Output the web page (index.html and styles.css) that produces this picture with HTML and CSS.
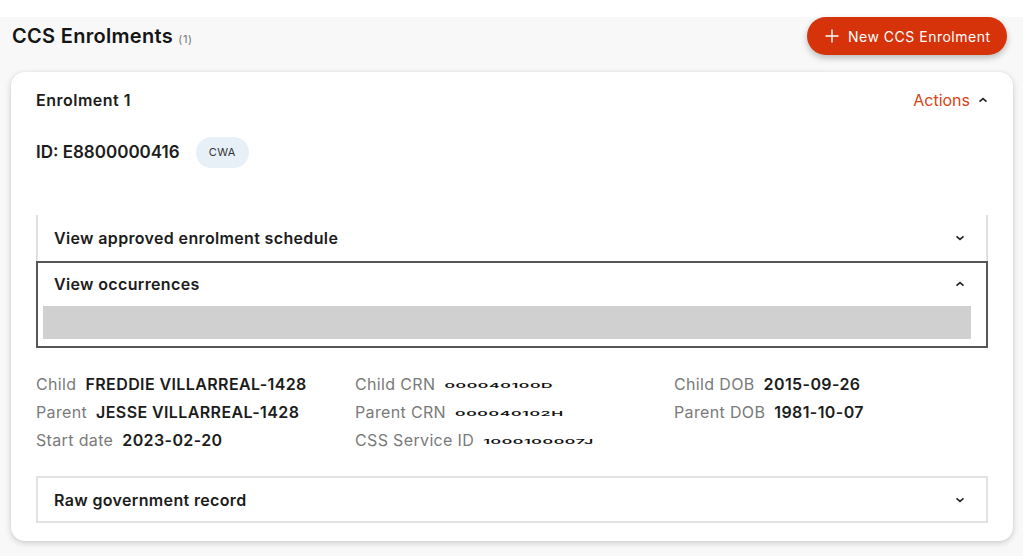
FILE: index.html
```html
<!DOCTYPE html>
<html>
<head>
<meta charset="utf-8">
<link rel="stylesheet" href="styles.css">
</head>
<body>
<div class="topstrip"></div>
<main class="page">
  <header class="page-head">
    <h1 class="title">CCS Enrolments <span class="count">(1)</span></h1>
    <button class="new-btn">
      <svg width="16" height="16" viewBox="0 0 16 16"><path d="M8 1.5v13M1.5 8h13" stroke="#fff" stroke-width="1.4" fill="none"/></svg>
      New CCS Enrolment
    </button>
  </header>
  <section class="card">
    <div class="card-head">
      <span class="card-title">Enrolment 1</span>
      <span class="actions">Actions
        <svg class="chev" width="10" height="8" viewBox="0 0 10 8"><path d="M1.5 5.6L5 2.6L8.5 5.6" stroke="#222" stroke-width="1.6" fill="none"/></svg>
      </span>
    </div>
    <div class="id-row">
      <span class="id">ID: E8800000416</span>
      <span class="chip">CWA</span>
    </div>
    <div class="accordion">
      <div class="acc-item acc-first">
        <span class="acc-title">View approved enrolment schedule</span>
        <svg class="chev" width="10" height="8" viewBox="0 0 10 8"><path d="M1.5 2.4L5 5.4L8.5 2.4" stroke="#222" stroke-width="1.6" fill="none"/></svg>
      </div>
      <div class="acc-item acc-open">
        <div class="acc-row">
          <span class="acc-title">View occurrences</span>
          <svg class="chev" width="10" height="8" viewBox="0 0 10 8"><path d="M1.5 5.6L5 2.6L8.5 5.6" stroke="#222" stroke-width="1.6" fill="none"/></svg>
        </div>
        <div class="acc-body"><div class="placeholder"></div></div>
      </div>
    </div>
    <div class="info">
      <div class="col">
        <div class="pair"><span class="lbl">Child</span><span class="val">FREDDIE VILLARREAL-1428</span></div>
        <div class="pair"><span class="lbl">Parent</span><span class="val">JESSE VILLARREAL-1428</span></div>
        <div class="pair"><span class="lbl">Start date</span><span class="val">2023-02-20</span></div>
      </div>
      <div class="col">
        <div class="pair"><span class="lbl">Child CRN</span><span class="val masked">000040100D</span></div>
        <div class="pair"><span class="lbl">Parent CRN</span><span class="val masked">000040102H</span></div>
        <div class="pair"><span class="lbl">CSS Service ID</span><span class="val masked">1000100007J</span></div>
      </div>
      <div class="col">
        <div class="pair"><span class="lbl">Child DOB</span><span class="val">2015-09-26</span></div>
        <div class="pair"><span class="lbl">Parent DOB</span><span class="val">1981-10-07</span></div>
      </div>
    </div>
    <div class="raw">
      <span class="acc-title">Raw government record</span>
      <svg class="chev" width="10" height="8" viewBox="0 0 10 8"><path d="M1.5 2.4L5 5.4L8.5 2.4" stroke="#222" stroke-width="1.6" fill="none"/></svg>
    </div>
  </section>
</main>
</body>
</html>
```
FILE: styles.css
```css
* { box-sizing: border-box; }
html, body { margin: 0; padding: 0; }
body {
  font-family: Inter, "Noto Sans", sans-serif;
  background: #f8f8f8;
  color: #1c1c1c;
  width: 1023px;
  height: 556px;
  overflow: hidden;
}
.topstrip { height: 17px; background: #fff; }
.page { padding: 0 10px 0 11px; }
.page-head {
  display: flex;
  justify-content: space-between;
  align-items: center;
  height: 38px;
  padding-right: 6px;
}
.title {
  margin: 0;
  font-size: 20px;
  font-weight: 600;
  letter-spacing: 0.3px;
  color: #151515;
  padding-left: 1px;
}
.count { font-size: 11px; font-weight: 400; color: #777; letter-spacing: 0.6px; margin-left: 0; }
.new-btn {
  display: flex;
  align-items: center;
  gap: 8px;
  height: 38px;
  width: 200px;
  padding: 0 0 0 17px;
  border: none;
  border-radius: 19px;
  background: #d6330a;
  color: #fff;
  font-family: Inter, sans-serif;
  font-size: 14px;
  letter-spacing: 0.5px;
  box-shadow: 0 3px 6px rgba(0,0,0,0.25);
}
.card {
  margin-top: 17px;
  width: 1002px;
  height: 469px;
  background: #fff;
  border-radius: 14px;
  box-shadow: 0 2px 6px rgba(0,0,0,0.18), 0 0 2px rgba(0,0,0,0.06);
  padding: 12px 25px 0 25px;
}
.card-head {
  display: flex;
  justify-content: space-between;
  align-items: center;
  height: 32px;
}
.card-title { font-size: 16px; font-weight: 600; letter-spacing: 0.5px; }
.actions {
  display: flex;
  align-items: center;
  gap: 8px;
  color: #d84315;
  font-size: 16px;
}
.id-row {
  display: flex;
  align-items: center;
  gap: 16px;
  margin-top: 20px;
  height: 32px;
}
.id { font-size: 17px; font-weight: 600; }
.chip {
  display: inline-flex;
  align-items: center;
  justify-content: center;
  width: 53px;
  height: 31px;
  border-radius: 16px;
  background: #e8f0f7;
  font-size: 11px;
  letter-spacing: 0.3px;
  color: #333;
}
.accordion { margin-top: 47px; }
.acc-item { padding: 0 21px 0 16px; }
.acc-first {
  height: 46px;
  border-left: 2px solid #e0e0e0;
  border-right: 2px solid #e0e0e0;
  display: flex;
  align-items: center;
  justify-content: space-between;
}
.acc-open {
  border: 2px solid #565656;
  height: 87px;
  padding: 0;
}
.acc-row {
  height: 42px;
  display: flex;
  align-items: center;
  justify-content: space-between;
  padding: 0 21px 0 16px;
}
.acc-body { padding: 1px 15px 0 5px; }
.placeholder { height: 33px; background: #d0d0d0; }
.acc-title { font-size: 16px; font-weight: 600; letter-spacing: 0.35px; color: #1c1c1c; }
.info {
  display: grid;
  grid-template-columns: 319px 319px 1fr;
  margin-top: 22px;
}
.pair {
  height: 28px;
  display: flex;
  align-items: center;
  gap: 9px;
  font-size: 16px;
}
.lbl { color: #7a7a7a; letter-spacing: 0.35px; }
.val { font-weight: 600; color: #1c1c1c; letter-spacing: 0.4px; }
.masked {
  display: inline-block;
  transform: scaleY(0.42);
  letter-spacing: 0.6px;
  position: relative;
  top: 1px;
  color: #111;
}
.raw {
  margin-top: 22px;
  height: 47px;
  border: 2px solid #e2e2e2;
  display: flex;
  align-items: center;
  justify-content: space-between;
  padding: 0 21px 0 16px;
}
.chev { display: block; }
```
